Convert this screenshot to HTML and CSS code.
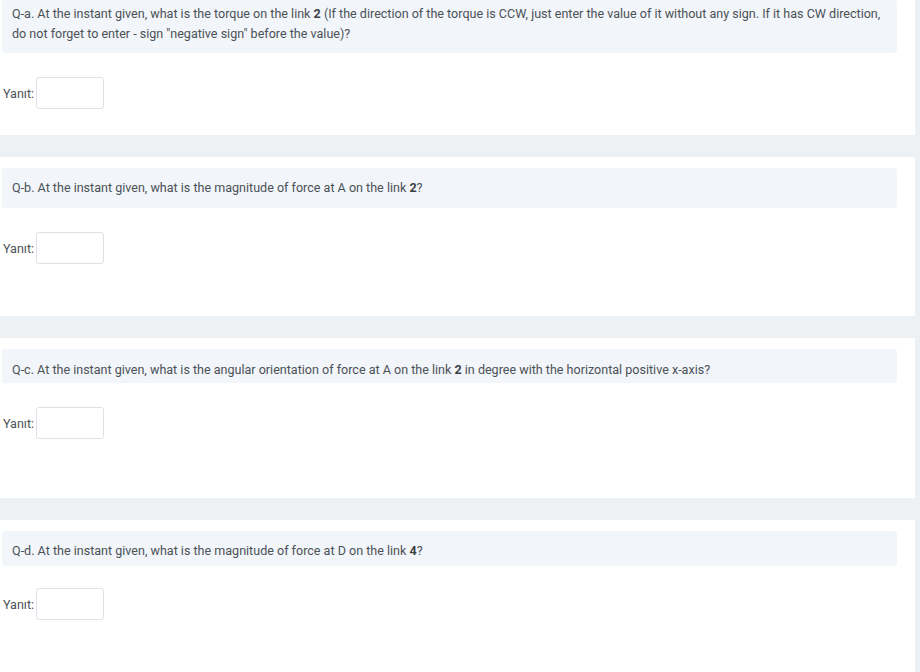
FILE: index.html
```html
<!DOCTYPE html>
<html lang="tr">
<head>
<meta charset="utf-8">
<link rel="stylesheet" href="styles.css">
</head>
<body>
<div class="page">
  <section class="que que-a">
    <div class="qtext qtext-a">Q-a. At the instant given, what is the torque on the link <b>2</b> (If the direction of the torque is CCW, just enter the value of it without any sign. If it has CW direction, do not forget to enter - sign "negative sign" before the value)?</div>
    <div class="answer"><label>Yanıt:</label><span class="input"></span></div>
  </section>
  <section class="que que-b">
    <div class="qtext qtext-b">Q-b. At the instant given, what is the magnitude of force at A on the link <b>2</b>?</div>
    <div class="answer"><label>Yanıt:</label><span class="input"></span></div>
  </section>
  <section class="que que-c">
    <div class="qtext qtext-c">Q-c. At the instant given, what is the angular orientation of force at A on the link <b>2</b> in degree with the horizontal positive x-axis?</div>
    <div class="answer"><label>Yanıt:</label><span class="input"></span></div>
  </section>
  <section class="que que-d">
    <div class="qtext qtext-d">Q-d. At the instant given, what is the magnitude of force at D on the link <b>4</b>?</div>
    <div class="answer answer-d"><label>Yanıt:</label><span class="input"></span></div>
  </section>
</div>
</body>
</html>
```
FILE: styles.css
```css
html, body {
  margin: 0;
  padding: 0;
  background: #eef1f3;
  height: 100%;
  overflow: hidden;
}
.page {
  display: flex;
  flex-direction: column;
  gap: 22px;
  width: 915px;
  height: 100%;
  font-family: Roboto, "Liberation Sans", sans-serif;
  font-size: 12.55px;
  color: #4b5258;
}
.que {
  background: #fff;
  padding: 11px 18px 0 2px;
  display: flex;
  flex-direction: column;
  box-sizing: border-box;
  flex-shrink: 0;
}
.que-a { height: 135px; padding-top: 0; }
.que-b { height: 159px; }
.que-c { height: 160px; }
.que-d { flex: 1 1 auto; }
.qtext {
  background: #f2f5f9;
  border-radius: 3px;
  padding: 10px 10px;
  line-height: 20px;
}
.qtext b { color: #3a3f44; font-weight: 700; }
.qtext-a { padding-top: 4px; padding-bottom: 9px; }
.qtext-b { padding-top: 10px; padding-bottom: 10px; }
.qtext-c { padding-top: 11px; padding-bottom: 3px; }
.qtext-d { padding-top: 10px; padding-bottom: 5px; }
.answer {
  display: flex;
  align-items: center;
  gap: 2px;
  margin-top: 24px;
  margin-left: 1px;
}
.answer-d { margin-top: 22px; }
.answer label { color: #4b5258; }
.input {
  display: block;
  width: 66px;
  height: 30px;
  border: 1px solid #dee2e6;
  border-radius: 3px;
  background: #fff;
}
```
